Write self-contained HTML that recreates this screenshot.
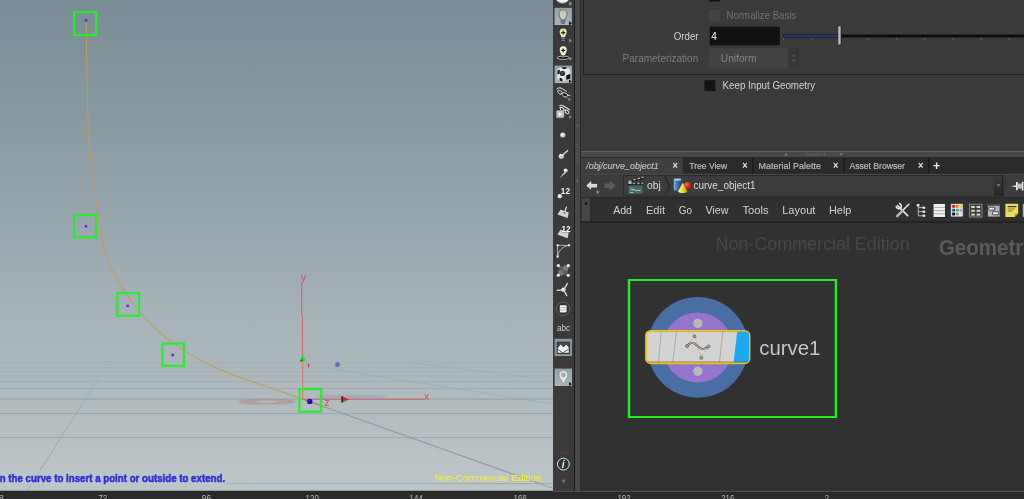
<!DOCTYPE html>
<html lang="en">
<head>
<meta charset="utf-8">
<title>Houdini - curve_object1</title>
<style>
*{box-sizing:border-box;margin:0;padding:0}
html,body{width:1024px;height:499px;overflow:hidden;background:#3a3a3a;font-family:"Liberation Sans",sans-serif;}
.abs{position:absolute}
#app{position:relative;width:1024px;height:499px;overflow:hidden;background:#3a3a3a}
#viewport{left:0;top:0;width:553px;height:491px;background:linear-gradient(to bottom,#798c95 0%,#8d9ea5 31%,#a3b0b6 61%,#b9c2c4 93%,#bcc5c7 100%);overflow:hidden}
#app svg{position:absolute;left:0;top:0;display:block}
#toolbar{left:553px;top:0;width:21px;height:491px;background:#3a3a3a;overflow:hidden}
#vdiv{left:574px;top:0;width:7px;height:491px;background:#484848;border-left:1px solid #1c1c1c;border-right:1px solid #2a2a2a}
#params{left:581px;top:0;width:443px;height:151px;background:#3a3a3a;overflow:hidden}
#hsplit{left:581px;top:151px;width:443px;height:7px;background:#484848;border-top:1px solid #5c5c5c;border-bottom:1px solid #2a2a2a}
#tabs{left:581px;top:158px;width:443px;height:17px;background:#2a2a2a;overflow:hidden}
#pathbar{left:581px;top:175px;width:443px;height:22px;background:#3a3a3a;overflow:hidden}
#menubar{left:581px;top:197px;width:443px;height:26px;background:#303030;overflow:hidden}
#network{left:581px;top:223px;width:443px;height:268px;background:#313131;overflow:hidden}
#timeline{left:0;top:490px;width:1024px;height:9px;overflow:hidden}
svg text{font-family:"Liberation Sans",sans-serif}
svg{will-change:transform}
#params svg,#tabs svg,#pathbar svg,#menubar svg,#timeline svg{filter:blur(.28px)}
#network text,#viewport text{filter:blur(.28px)}
</style>
</head>
<body>
<div id="app">
<!--VIEWPORT-->
<div id="viewport" class="abs">
<svg width="553" height="491" viewBox="0 0 553 491">
<defs>
<filter id="bl1" x="-20%" y="-200%" width="140%" height="500%"><feGaussianBlur stdDeviation="1.2"/></filter>
<filter id="soft" x="-10%" y="-10%" width="120%" height="120%"><feGaussianBlur stdDeviation="0.35"/></filter>
<linearGradient id="dg" gradientUnits="userSpaceOnUse" x1="112" y1="357" x2="27" y2="491"><stop offset="0" stop-color="#8896a0" stop-opacity="0"/><stop offset=".3" stop-color="#8896a0" stop-opacity=".7"/><stop offset="1" stop-color="#8896a0" stop-opacity="1"/></linearGradient>
<filter id="bl2" x="-20%" y="-200%" width="140%" height="500%"><feGaussianBlur stdDeviation="0.9 0.6"/></filter>
</defs>
<!-- ground grid -->
<g fill="none" stroke="#8896a0" stroke-width="1">
<path d="M0 355.4H553" opacity=".06"/>
<path d="M0 358.2H553" opacity=".09"/>
<path d="M0 361.6H553" opacity=".12"/>
<path d="M0 364.2H553" opacity=".15"/>
<path d="M0 367.7H553" opacity=".18"/>
<path d="M0 371.7H553" opacity=".22"/>
<path d="M0 376H553" opacity=".26"/>
<path d="M0 381.6H553" opacity=".32"/>
<path d="M0 388.5H553" opacity=".4"/>
<path d="M0 399.1H553" stroke-width="1.3" opacity=".62"/>
<path d="M0 413.6H553" opacity=".5"/>
<path d="M0 437.6H553" opacity=".55"/>
<path d="M226 483.6H553" opacity=".5"/>
<path d="M112 357L27 491" stroke="url(#dg)" opacity=".6"/>
<path d="M330 368.5L553 404" opacity=".3"/>
<path d="M410 362.5L553 380" opacity=".18"/>
</g>
<path d="M303 399.3L553 488.3" stroke="#7c8994" stroke-width="1.2" fill="none" opacity=".6"/>
<!-- shadows -->
<path fill-rule="evenodd" d="M237.6 401.7A29 3.1 0 1 0 295.6 401.7A29 3.1 0 1 0 237.6 401.7ZM255.6 401.6A11 1.2 0 1 0 277.6 401.6A11 1.2 0 1 0 255.6 401.6Z" fill="#ae9696" opacity=".75" filter="url(#bl2)"/>
<ellipse cx="352" cy="396.6" rx="38" ry="1.6" fill="#8f95b4" opacity=".55" filter="url(#bl1)"/>
<!-- curve -->
<path id="crv" d="M86.2 21C86.6 60 87.2 95 88.2 125C89.4 150 91 166 93.2 180C95.4 197 97.6 214 100.2 230C102.6 243 106 254 110.2 265C114.5 276 120 285 125.2 292.7C131 301 136 308 140.1 312.6C150 324 161 334 172.7 342.6C183 350 194 357 205.2 362.7C221 370.5 238 377 255.3 382.7C270 387.7 284 392.5 297.9 397.2L302.5 399" fill="none" stroke="#c39b58" stroke-width="1.05" opacity=".92"/>
<!-- axes -->
<g fill="none" stroke="#e2555a" stroke-width="1" opacity=".85">
<path d="M301.7 282.5V314.6M302.4 314.6V356"/>
<path d="M303 399.3H424"/>
<path d="M303 399.3L323 406.3"/>
</g>
<path d="M302.7 361V399" stroke="#e0685c" stroke-width="1" fill="none" opacity=".9"/><path d="M303.5 361V396" stroke="#9cc070" stroke-width=".6" fill="none" opacity=".6"/>
<path d="M302.7 354L305.6 361.2H299.8Z" fill="#1fe028"/>
<path d="M300 361.3H302.3V358.5Z" fill="#1b4a1b"/>
<rect x="307.9" y="363.6" width="1.2" height="3.4" fill="#e8202a"/>
<circle cx="337.5" cy="364.6" r="2.5" fill="#5c6cc4" stroke="#7f8bc8" stroke-width=".8"/>
<path d="M341.5 396.3L349.2 399.4L341.5 402.5Z" fill="#f01820"/>
<path d="M341.5 396.3H343V402.5H341.5Z" fill="#4a1b1b"/>
<path d="M343.5 400.5L349 399.6L343.5 402.4Z" fill="#5a9a30" opacity=".7"/>
<g font-size="10.5" fill="#e4494d" font-family="Liberation Sans, sans-serif">
<text x="300.7" y="280.6" textLength="5.4" lengthAdjust="spacingAndGlyphs">y</text>
<text x="424" y="399.8" textLength="5.2" lengthAdjust="spacingAndGlyphs">x</text>
<text x="324.6" y="406.4" textLength="5" lengthAdjust="spacingAndGlyphs">z</text>
</g>
<!-- handles -->
<g fill="none" stroke="#24f024" stroke-width="2.1" filter="url(#soft)">
<rect x="74.1" y="12.1" width="22" height="23"/>
<rect x="74.1" y="214.9" width="22" height="22.4"/>
<rect x="117.3" y="293.1" width="21.8" height="22.7"/>
<rect x="162.4" y="343.5" width="21.6" height="22.4"/>
<rect x="299.4" y="389.1" width="21.8" height="22.5"/>
</g>
<g fill="#6a22e0">
<rect x="84.8" y="19.2" width="2.5" height="2.5"/>
<rect x="84.7" y="225" width="2.5" height="2.5"/>
<rect x="126.4" y="304.6" width="2.5" height="2.5"/>
<rect x="171.5" y="353.7" width="2.5" height="2.5"/>
</g>
<circle cx="309.8" cy="401.4" r="2.7" fill="#1212b0"/>
<circle cx="309.2" cy="400.7" r="1" fill="#3030d0"/>
<!-- status text -->
<rect x="0" y="470.5" width="226" height="15" fill="#c3cbcc" opacity=".35"/>
<text x="-0.3" y="481.8" font-size="10.7" font-weight="bold" fill="#3030dc" stroke="#3030dc" stroke-width=".55" textLength="225.4" lengthAdjust="spacingAndGlyphs">n the curve to insert a point or outside to extend.</text>
<text x="434.2" y="481.1" font-size="9.9" fill="#ecec40" stroke="#ecec40" stroke-width=".2" textLength="107.4" lengthAdjust="spacingAndGlyphs">Non-Commercial Edition</text>
</svg>
</div>
<!--TOOLBAR-->
<div id="toolbar" class="abs">
<svg width="21" height="491" viewBox="553 0 21 491">
<defs>
<linearGradient id="hl" x1="0" x2="0" y1="0" y2="1"><stop offset="0" stop-color="#8ea2ab"/><stop offset="1" stop-color="#a7b5ba"/></linearGradient>
<radialGradient id="ball" cx=".4" cy=".35" r=".7"><stop offset="0" stop-color="#ffffff"/><stop offset="1" stop-color="#b4b4ac"/></radialGradient>
<filter id="tsoft" x="-10%" y="-10%" width="120%" height="120%"><feGaussianBlur stdDeviation="0.3"/></filter>
<linearGradient id="cubeg" x1="0" x2="1" y1="0" y2="1"><stop offset="0" stop-color="#ffffff"/><stop offset=".6" stop-color="#e2e2e2"/><stop offset="1" stop-color="#a8a8a8"/></linearGradient>
</defs>
<g filter="url(#tsoft)">
<!-- partial top icon -->
<ellipse cx="562.6" cy="-1.2" rx="6.4" ry="4.6" fill="#f0f0f0" stroke="#5a6a70" stroke-width="1"/>
<path d="M569.2 1.6L572.4 3.6L569.2 6.2Z" fill="#8c8c8c"/>
<!-- bulb (active) -->
<rect x="554.5" y="7.8" width="17.4" height="17.2" fill="url(#hl)"/>
<path d="M563 9.8C566.2 9.8 567.4 12.4 567 14.8C566.6 17 565.2 18.2 565 20H561C560.8 18.2 559.4 17 559 14.8C558.6 12.4 559.8 9.8 563 9.8Z" fill="#c9cab4" stroke="#4e6068" stroke-width=".8"/>
<rect x="561.2" y="20.2" width="3.6" height="3.2" rx=".6" fill="#6c7c84" stroke="#46565e" stroke-width=".6"/>
<path d="M569 21L572 23.2L569 25.4Z" fill="#1c1c1c"/>
<!-- bulb + -->
<path d="M563.2 28.4C566 28.4 567 30.6 566.7 32.6C566.4 34.6 565.2 35.6 565 37.2H561.4C561.2 35.6 560 34.6 559.7 32.6C559.4 30.6 560.4 28.4 563.2 28.4Z" fill="#ecebaa"/>
<path d="M561.2 32.6H565.2M563.2 30.6V34.6" stroke="#222" stroke-width="1.2"/>
<path d="M561.6 38.6H564.8M561.6 40.4H564.8" stroke="#8a8a8a" stroke-width="1"/>
<path d="M569 38.4L572 40.6L569 42.8Z" fill="#888"/>
<!-- bulb + stand -->
<path d="M563.2 46.2C566 46.2 567 48.4 566.7 50.4C566.4 52.4 565.2 53.4 565 55H561.4C561.2 53.4 560 52.4 559.7 50.4C559.4 48.4 560.4 46.2 563.2 46.2Z" fill="#f6f6e0"/>
<path d="M561.2 50.4H565.2M563.2 48.4V52.4" stroke="#222" stroke-width="1.2"/>
<ellipse cx="563.2" cy="57.8" rx="6" ry="1.6" fill="#111" stroke="#d8d8d8" stroke-width=".8"/>
<rect x="562.2" y="55" width="2" height="2.6" fill="#8a9aa0"/>
<path d="M569.6 57.2L572 58.8L569.6 60.6Z" fill="#aaa"/>
<!-- checker cube (active) -->
<rect x="554.6" y="65.6" width="17.4" height="17.5" fill="url(#hl)"/>
<path d="M557.4 70.6Q557.3 68.7 559.5 68.1L563.8 67.1Q566 66.8 567.8 67.8L569.6 69.2Q570.4 70 570.4 71.4V77.6Q570.4 79.3 568.8 80L564.2 81.6Q562.6 82 561.2 81.4L558.4 79.8Q557.4 79.2 557.4 77.8Z" fill="url(#cubeg)"/>
<path d="M561.2 67.6L565.6 66.9L567.4 68.2L563.4 69.2ZM557.5 70.4L559.8 69.4V73.6L557.5 74.4ZM566.2 75.2L570.3 74V78.4L566.2 79.8ZM559.6 77.6L562.4 78.8V81.6L559.6 80.4Z" fill="#141414"/>
<circle cx="562.4" cy="73.4" r="2.7" fill="#2e2e2e"/>
<circle cx="562.2" cy="73.2" r="1.3" fill="#4a4a4a"/>
<path d="M569 79.6L572 81.4L569 83.2Z" fill="#1c1c1c"/>
<!-- glasses -->
<g fill="none" stroke="#e6e6e6" stroke-width="1">
<path d="M556.8 89C558.2 87.4 560.4 87.4 562.4 88.8L566.6 91.4"/>
<path d="M557.6 90.8C558.8 89.8 560.6 90.2 561.6 91.6C562.4 93 561.8 94.4 560.4 94.2C558.8 93.8 557.8 92.4 557.6 90.8Z" fill="#3a3a3a"/>
<path d="M561.8 93.4C563.4 92.2 566 92.8 567.2 94.6C567.8 96 567 97.4 565.2 97C563.4 96.6 562.2 95 561.8 93.4Z" fill="#0c0c0c"/>
<path d="M567 94.6L570.2 95.8"/>
</g>
<path d="M567 98.4H571.2L569.1 101.2Z" fill="#808080"/>
<!-- glasses + play -->
<g fill="none" stroke="#e6e6e6" stroke-width="1.1">
<path d="M559.4 105.6C561 104.8 562.4 105.2 564 106.2L570 110"/>
<path d="M560 107.6C561.4 107.2 563 107.8 563.8 109C564.4 110.2 563.6 111.4 562.4 111C561.2 110.6 560.2 109.2 560 107.6Z" fill="#222"/>
<path d="M564.8 110C566.2 109.8 568 110.6 568.8 112C569.2 113.2 568.4 114 567 113.6C565.8 113.2 565 111.6 564.8 110Z" fill="#222"/>
</g>
<rect x="556.4" y="110.6" width="7.6" height="7.2" rx="1" fill="#c4c8c8" stroke="#8a9090" stroke-width=".6"/>
<path d="M559 112.4L562.2 114.2L559 116Z" fill="#fff"/>
<path d="M569.2 115L571.8 117L569.2 119Z" fill="#8a8a8a"/>
<!-- dot -->
<circle cx="562.8" cy="135" r="2.6" fill="url(#ball)"/>
<!-- pin -->
<path d="M562.4 155.2L568 150.2" stroke="#e2e2e2" stroke-width="1.3"/>
<circle cx="561.3" cy="156.3" r="2.6" fill="url(#ball)"/>
<circle cx="561.3" cy="156.3" r="1.1" fill="#8a8a8a" opacity=".5"/>
<!-- needle -->
<path d="M564.4 172L559.2 178.4L566.4 172.8Z" fill="#c8c8c8"/>
<circle cx="565.7" cy="170.6" r="2.1" fill="url(#ball)"/>
<!-- .12 -->
<circle cx="559.8" cy="196.2" r="2.3" fill="url(#ball)"/>
<text x="560.8" y="194.2" font-size="8.4" font-weight="bold" fill="#f4f4f4" textLength="9.2" lengthAdjust="spacingAndGlyphs">12</text>
<!-- paper pin -->
<path d="M560.6 209.6L568.8 212.4L567.6 218L557.4 214.4Z" fill="#d4d4cc"/>
<path d="M566.6 206.6L564.6 212.6" stroke="#f0f0f0" stroke-width="1.1"/>
<circle cx="564.4" cy="213" r="1.1" fill="#7a7a7a"/>
<!-- paper 12 -->
<path d="M560.6 229.4L568.8 232.2L567.6 238.2L557.4 234.4Z" fill="#d4d4cc"/>
<text x="561.6" y="232.4" font-size="8.4" font-weight="bold" fill="#f8f8f8" textLength="9" lengthAdjust="spacingAndGlyphs" stroke="#3a3a3a" stroke-width=".5" paint-order="stroke">12</text>
<!-- curve corner -->
<g fill="none" stroke="#b4c6b4" stroke-width=".9">
<path d="M557.6 256.6V245.3H569"/>
<path d="M557.6 256.6C558.4 251 562 246.6 569 245.3"/>
</g>
<g fill="#eef4ee"><rect x="556.6" y="244.3" width="2" height="2"/><rect x="568" y="244.3" width="2" height="2"/><rect x="556.6" y="255.6" width="2" height="2"/></g>
<!-- 4 dots -->
<rect x="558.3" y="265.6" width="10" height="9.8" fill="#5a5a5a" stroke="#2a2a2a" stroke-width=".6"/>
<path d="M563.3 265.6H568.3V270.5H563.3ZM558.3 270.5H563.3V275.4H558.3Z" fill="#7a7a7a"/>
<g fill="#f0f0f0"><circle cx="558.3" cy="265.6" r="1.6"/><circle cx="568.3" cy="265.6" r="1.6"/><circle cx="558.3" cy="275.3" r="1.6"/><circle cx="568.3" cy="275.3" r="1.6"/></g>
<!-- tripod -->
<g stroke="#e2e2e2" stroke-width="1.3" stroke-linecap="round"><path d="M563.5 289.8L567.4 283.6M563.5 289.8L557.2 290.4M563.5 289.8L566.8 295.6"/></g>
<circle cx="563.5" cy="289.8" r="2.3" fill="url(#ball)"/>
<!-- circle list -->
<circle cx="563.1" cy="308.8" r="6.6" fill="#333" stroke="#6a6a62" stroke-width=".9"/>
<rect x="559.8" y="305.2" width="6.8" height="7.2" rx=".8" fill="#f2f2f2"/>
<path d="M559.8 307.6H566.6M559.8 310H566.6" stroke="#9ab09a" stroke-width=".8"/>
<!-- abc -->
<text x="556.9" y="330.7" font-size="9.4" fill="#cfcfcf" textLength="13.2" lengthAdjust="spacingAndGlyphs">abc</text>
<!-- landscape (active) -->
<rect x="554.6" y="338.8" width="17.4" height="17.3" fill="#8598a0"/>
<rect x="557.2" y="342.2" width="12.2" height="11.2" fill="#4a4a4a" stroke="#262626" stroke-width=".8"/>
<path d="M557.8 348L560.8 344.6L563.4 347.4L566.2 344.8L568.8 347.6V352.8H557.8Z" fill="#f4f4f4"/>
<path d="M557.8 349.4L562.8 352.8L568.8 349" fill="none" stroke="#555" stroke-width="1"/>
<!-- marker (active) -->
<rect x="554.6" y="368.6" width="17.4" height="17.4" fill="url(#hl)"/>
<path d="M563.4 370.6C566.2 370.6 567.8 372.6 567.8 375C567.8 378 564.6 381 563.4 384.6C562.2 381 559 378 559 375C559 372.6 560.6 370.6 563.4 370.6Z" fill="#e4e4e4" stroke="#7a8488" stroke-width=".6"/>
<circle cx="563.4" cy="375" r="1.9" fill="#a4a8a8" stroke="#888" stroke-width=".5"/>
<path d="M569 382L572 384L569 386.2Z" fill="#1c1c1c"/>
<!-- separator -->
<rect x="554" y="452.4" width="19" height=".8" fill="#444"/>
<!-- info -->
<circle cx="563.4" cy="464.1" r="5.9" fill="#27343a" stroke="#e6e6e6" stroke-width="1"/>
<text x="561.7" y="468" font-size="10" font-weight="bold" font-style="italic" font-family="Liberation Serif, serif" fill="#f0f0f0">i</text>
<path d="M561.4 479.8H565.6L563.5 483.4Z" fill="#777"/>
</g>
</svg>
</div>
<div id="vdiv" class="abs">
<svg width="5" height="491" viewBox="575 0 5 491">
<g fill="#5e5e5e"><rect x="576.4" y="144" width="2.4" height=".8"/><rect x="576.4" y="146.6" width="2.4" height=".8"/><rect x="576.4" y="149.2" width="2.4" height=".8"/><rect x="576.4" y="151.8" width="2.4" height=".8"/><rect x="576.4" y="154.4" width="2.4" height=".8"/><rect x="576.4" y="157" width="2.4" height=".8"/><rect x="576.4" y="159.6" width="2.4" height=".8"/><rect x="576.4" y="162.2" width="2.4" height=".8"/></g>
<path d="M578.4 123.8V127.8L576.4 125.8ZM576.6 178.6V182.6L578.6 180.6Z" fill="#6a6a6a"/>
</svg>
</div>
<!--PARAMS-->
<div id="params" class="abs">
<svg width="443" height="151" viewBox="581 0 443 151">
<defs>
<linearGradient id="hg" x1="0" x2="1" y1="0" y2="0"><stop offset="0" stop-color="#d8d8d8"/><stop offset=".5" stop-color="#b8b8b8"/><stop offset="1" stop-color="#8a8a8a"/></linearGradient>
</defs>
<path d="M583.5 0V74.4H1024" fill="none" stroke="#222" stroke-width="1"/>
<rect x="709" y="0" width="11" height="1.6" fill="#141414"/>
<rect x="709" y="10" width="11" height="11" fill="#434343"/>
<text x="726.6" y="19.3" font-size="10.5" fill="#727272" textLength="69.6" lengthAdjust="spacingAndGlyphs">Normalize Basis</text>
<text x="673.8" y="39.7" font-size="10.5" fill="#d2d2d2" textLength="24.8" lengthAdjust="spacingAndGlyphs">Order</text>
<rect x="709.7" y="26.6" width="70.1" height="18.8" fill="#111"/>
<text x="711.2" y="39.7" font-size="10.5" fill="#fff" textLength="5.6" lengthAdjust="spacingAndGlyphs">4</text>
<rect x="783" y="34.6" width="241" height="2.8" fill="#0c0c0c"/>
<rect x="783.6" y="35.3" width="55" height="1.4" fill="#21549a"/>
<g fill="#6a6a6a">
<rect x="783" y="38" width="1" height="1.6"/><rect x="811.2" y="38" width="1" height="1.6"/><rect x="867.5" y="38" width="1" height="1.6"/><rect x="895.7" y="38" width="1" height="1.6"/><rect x="924" y="38" width="1" height="1.6"/><rect x="952.5" y="38" width="1" height="1.6"/><rect x="980.7" y="38" width="1" height="1.6"/><rect x="1008.7" y="38" width="1" height="1.6"/>
</g>
<rect x="840.2" y="26.6" width="1.4" height="18" rx=".5" fill="#1c1c1c"/><rect x="838.4" y="26.3" width="2.5" height="18.3" rx=".8" fill="url(#hg)"/>
<text x="622.6" y="62" font-size="10.5" fill="#7c7c7c" textLength="75.6" lengthAdjust="spacingAndGlyphs">Parameterization</text>
<rect x="708.8" y="48.2" width="90.6" height="19.4" rx="1" fill="#424242"/>
<rect x="788" y="48.2" width="11.4" height="19.4" fill="#363636"/>
<path d="M793.8 53.4L795.6 56.6H792ZM793.8 62.4L795.6 59.2H792Z" fill="#505050"/>
<text x="720.8" y="62" font-size="10.5" fill="#858585" textLength="35.6" lengthAdjust="spacingAndGlyphs">Uniform</text>
<rect x="704.4" y="80.2" width="11" height="10.8" fill="#141414"/>
<text x="722.6" y="89.1" font-size="10.5" fill="#d2d2d2" textLength="92.6" lengthAdjust="spacingAndGlyphs">Keep Input Geometry</text>
</svg>
</div>
<div id="hsplit" class="abs">
<svg width="443" height="5" viewBox="581 152 443 5">
<path d="M784 155.4L786 153.2L788 155.4ZM839 153.4L841 155.6L843 153.4Z" fill="#808080"/>
<g fill="#6a6a6a"><rect x="806" y="153.4" width="1" height="2.2"/><rect x="808.6" y="153.4" width="1" height="2.2"/><rect x="811.2" y="153.4" width="1" height="2.2"/><rect x="813.8" y="153.4" width="1" height="2.2"/><rect x="816.4" y="153.4" width="1" height="2.2"/><rect x="819" y="153.4" width="1" height="2.2"/><rect x="821.6" y="153.4" width="1" height="2.2"/><rect x="824.2" y="153.4" width="1" height="2.2"/></g>
</svg>
</div>
<!--TABS-->
<div id="tabs" class="abs">
<svg width="443" height="17" viewBox="581 158 443 17">
<rect x="581" y="157.8" width="101.9" height="17.2" fill="#3f3f3f"/>
<g fill="#1a1a1a"><rect x="752" y="158" width="1.4" height="17"/><rect x="843" y="158" width="1.4" height="17"/><rect x="928" y="158" width="1.4" height="17"/></g>
<rect x="581" y="173.8" width="443" height="1.4" fill="#474747"/>
<g font-size="9.2" fill="#bcbcbc" stroke="#bcbcbc" stroke-width=".2">
<text x="586.2" y="169.4" font-style="italic" textLength="72.6" lengthAdjust="spacingAndGlyphs">/obj/curve_object1</text>
<text x="689.3" y="169.4" textLength="38" lengthAdjust="spacingAndGlyphs">Tree View</text>
<text x="758.5" y="169.4" textLength="62.4" lengthAdjust="spacingAndGlyphs">Material Palette</text>
<text x="849.4" y="169.4" textLength="55.6" lengthAdjust="spacingAndGlyphs">Asset Browser</text>
</g>
<g font-size="10" font-weight="bold" fill="#e4e4e4">
<text x="672.6" y="168.6" textLength="5.4" lengthAdjust="spacingAndGlyphs">×</text>
<text x="742.2" y="168.6" textLength="5.4" lengthAdjust="spacingAndGlyphs">×</text>
<text x="833" y="168.6" textLength="5.4" lengthAdjust="spacingAndGlyphs">×</text>
<text x="918" y="168.6" textLength="5.4" lengthAdjust="spacingAndGlyphs">×</text>
<text x="933" y="169.6" font-size="12" textLength="7.2" lengthAdjust="spacingAndGlyphs">+</text>
</g>
</svg>
</div>
<!--PATHBAR-->
<div id="pathbar" class="abs">
<svg width="443" height="22" viewBox="581 175 443 22">
<defs>
<linearGradient id="ag" x1="0" x2="0" y1="0" y2="1"><stop offset="0" stop-color="#f4f4f4"/><stop offset="1" stop-color="#b8b8b8"/></linearGradient>
<linearGradient id="cyl" x1="0" x2="1" y1="0" y2="0"><stop offset="0" stop-color="#8ab4e0"/><stop offset=".45" stop-color="#3a6eb4"/><stop offset="1" stop-color="#1e4680"/></linearGradient>
<radialGradient id="sph" cx=".38" cy=".3" r=".8"><stop offset="0" stop-color="#f07060"/><stop offset=".5" stop-color="#cc2a1a"/><stop offset="1" stop-color="#7e1208"/></radialGradient>
<linearGradient id="cone" x1="0" x2="1" y1="0" y2="0"><stop offset="0" stop-color="#fff8b0"/><stop offset=".5" stop-color="#f0d838"/><stop offset="1" stop-color="#b8920c"/></linearGradient>
<linearGradient id="ddg" x1="0" x2="0" y1="0" y2="1"><stop offset="0" stop-color="#3c3c3c"/><stop offset="1" stop-color="#272727"/></linearGradient>
</defs>
<rect x="581" y="175" width="443" height="22" fill="#3c3c3c"/>
<rect x="623.4" y="175.6" width="379.4" height="20.4" fill="#3c3c3c" stroke="#2a2a2a" stroke-width=".9"/>
<rect x="994" y="176" width="8.4" height="20" fill="url(#ddg)"/><rect x="1002.2" y="175.4" width="1" height="21" fill="#1e1e1e"/>
<path d="M996.5 183.9H1000.5L998.5 187Z" fill="#767676"/>
<!-- back / forward -->
<path d="M585.8 185.6L591.6 180.3V183.4H597.6V188H591.6V191Z" fill="url(#ag)" stroke="#202028" stroke-width=".7"/>
<path d="M596.6 189.8L599.6 192L596.6 194.4Z" fill="#8a8a8a"/>
<path d="M615.6 185.6L609.8 180.4V183.5H604.4V187.9H609.8V190.9Z" fill="#5a5a5a"/>
<!-- obj icon: clapperboard -->
<g>
<rect x="627.8" y="185" width="15.6" height="9.4" fill="#2c4244"/>
<rect x="628.6" y="185.8" width="14" height="7.8" fill="#48686a"/>
<path d="M630.4 190.4C631.4 188 632.4 188 633 190.4C633.6 188.6 634.6 188.6 635 190.4H640.6M630 192.6H633.4" stroke="#d4dede" stroke-width=".9" fill="none" opacity=".85"/>
<rect x="627.8" y="182.2" width="15.6" height="2.7" fill="#1c1c1c"/>
<path d="M632.6 182.6h2.6v1.6h-2.6zM637 182.6h2.6v1.6h-2.6zM641.2 182.6h2v1.6h-2z" fill="#9a9a9a"/>
<path d="M627.8 181L643.2 176.8L643.8 178.9L628.4 183.2Z" fill="#1c1c1c"/>
<path d="M633 179.4l2.6-.7.3 1.2-2.6.7zM637.4 178.2l2.6-.7.3 1.2-2.6.7zM641.4 177.1l1.8-.5.3 1.2-1.8.5z" fill="#b4b4b4"/>
<rect x="628.4" y="180.6" width="3.2" height="3.4" fill="#a9bcc6"/>
</g>
<text x="647" y="188.5" font-size="11.1" fill="#dadada" textLength="13.8" lengthAdjust="spacingAndGlyphs">obj</text>
<path d="M664.6 176L669.6 186L664.6 196" fill="none" stroke="#202020" stroke-width="1"/>
<!-- geometry icon -->
<g>
<circle cx="687.6" cy="185.8" r="3.8" fill="url(#sph)"/>
<path d="M673.8 179.6C673.8 178 681.4 178 681.4 179.6V189.6C681.4 191.2 673.8 191.2 673.8 189.6Z" fill="url(#cyl)"/>
<ellipse cx="677.6" cy="179.6" rx="3.8" ry="1.2" fill="#a8c8ee"/>
<path d="M682.8 182.6L687.4 191.4C686 193.4 679.4 193.4 678 191.4Z" fill="url(#cone)"/>
</g>
<text x="693.5" y="188.5" font-size="11.1" fill="#dadada" textLength="62" lengthAdjust="spacingAndGlyphs">curve_object1</text>
<!-- pin -->
<g>
<path d="M1010.8 186.2L1016 185.2V187.2Z" fill="#d0d0d0"/>
<rect x="1016" y="182" width="1.8" height="8.2" fill="#e8e8e8"/>
<rect x="1017.8" y="183.6" width="4" height="5" fill="#c0c0c0"/>
<rect x="1021.8" y="181.6" width="1.6" height="9" fill="#e0e0e0"/>
</g>
</svg>
</div>
<!--MENUBAR-->
<div id="menubar" class="abs">
<svg width="443" height="26" viewBox="581 197 443 26">
<rect x="581" y="197" width="443" height="1.4" fill="#2a2a2a"/>
<rect x="581" y="221.2" width="443" height="1.8" fill="#222"/>
<rect x="581.8" y="198.4" width="8.6" height="22.8" fill="#464646"/>
<rect x="590.4" y="198.4" width="1" height="22.8" fill="#242424"/>
<path d="M586.2 201.6L587.8 204.4H584.6Z" fill="#0a0a0a"/>
<path d="M600.4 208.4V211.6L598 210Z" fill="#383838"/>
<g font-size="10.9" fill="#d2d2d2">
<text x="613.2" y="213.9" textLength="18.8" lengthAdjust="spacingAndGlyphs">Add</text>
<text x="646" y="213.9" textLength="19" lengthAdjust="spacingAndGlyphs">Edit</text>
<text x="678.8" y="213.9" textLength="13.2" lengthAdjust="spacingAndGlyphs">Go</text>
<text x="705.4" y="213.9" textLength="23" lengthAdjust="spacingAndGlyphs">View</text>
<text x="742.4" y="213.9" textLength="26.2" lengthAdjust="spacingAndGlyphs">Tools</text>
<text x="782.2" y="213.9" textLength="33.2" lengthAdjust="spacingAndGlyphs">Layout</text>
<text x="829" y="213.9" textLength="22.4" lengthAdjust="spacingAndGlyphs">Help</text>
</g>
<!-- wrench & screwdriver -->
<g stroke-linecap="round" fill="none">
<path d="M897.6 205.6L907.6 215.6" stroke="#d8d8d8" stroke-width="2"/>
<path d="M896.2 206.6A2.6 2.6 0 1 0 899.6 203.6" stroke="#e8e8e8" stroke-width="1.6"/>
<path d="M908.8 204.2L903.6 209.6" stroke="#e8e8e8" stroke-width="1.5"/>
<path d="M902.4 210.8L897.2 216.2" stroke="#b8b8b8" stroke-width="2.4"/>
</g>
<!-- tree -->
<g fill="none" stroke="#a8c0a8" stroke-width="1">
<path d="M918.3 206V215.8H923M918.3 207.6H923M918.3 211.6H923"/>
</g>
<g fill="#e8e8e8"><rect x="916.8" y="204" width="2.6" height="2.4"/><rect x="922.6" y="206.6" width="2.6" height="2.2"/><rect x="922.6" y="210.6" width="2.6" height="2.2"/><rect x="922.6" y="214.6" width="2.6" height="2.2"/></g>
<!-- list -->
<rect x="933.6" y="204" width="11.4" height="13.2" fill="#f0f0f0"/>
<path d="M933.6 207.4H945M933.6 210.6H945M933.6 213.8H945" stroke="#9cb89c" stroke-width="1"/>
<rect x="934.4" y="217.2" width="11.4" height=".8" fill="#1a1a1a"/>
<!-- palette -->
<rect x="950.6" y="203.6" width="12.6" height="13.4" rx="1" fill="#e8e8e8" stroke="#303048" stroke-width=".8"/>
<g>
<rect x="952.2" y="205" width="2.8" height="2.8" fill="#e02020"/><rect x="955.8" y="205" width="2.8" height="2.8" fill="#f08020"/><rect x="959.4" y="205" width="2.8" height="2.8" fill="#f0d020"/>
<rect x="952.2" y="208.8" width="2.8" height="2.8" fill="#1c5cb0"/><rect x="955.8" y="208.8" width="2.8" height="2.8" fill="#30c030"/><rect x="959.4" y="208.8" width="2.8" height="2.8" fill="#80a8e0"/>
<rect x="952.2" y="212.6" width="2.8" height="2.8" fill="#101010"/><rect x="955.8" y="212.6" width="2.8" height="2.8" fill="#909090"/><rect x="959.4" y="212.6" width="2.8" height="2.8" fill="#d8e4d8"/>
</g>
<!-- grid -->
<rect x="969.4" y="204.2" width="12.6" height="12.8" fill="#3c3c3c" stroke="#909090" stroke-width=".9"/>
<g fill="#d8d8d8"><rect x="971.2" y="206" width="3.6" height="2"/><rect x="976.6" y="206" width="3.6" height="2"/><rect x="971.2" y="209.8" width="3.6" height="2"/><rect x="976.6" y="209.8" width="3.6" height="2"/><rect x="971.2" y="213.6" width="3.6" height="2"/><rect x="976.6" y="213.6" width="3.6" height="2"/></g>
<!-- layout -->
<rect x="987.4" y="204" width="12.6" height="13" fill="#b4b4b4" stroke="#303040" stroke-width=".8"/>
<rect x="987.4" y="204" width="12.6" height="1.8" fill="#404858"/>
<rect x="988.8" y="207.2" width="6" height="3" rx=".6" fill="#f4f4f4" stroke="#202020" stroke-width=".8"/>
<rect x="992.6" y="211.8" width="6" height="3" rx=".6" fill="#f4f4f4" stroke="#202020" stroke-width=".8"/>
<!-- sticky -->
<path d="M1005.4 203.8H1018.2V213.6L1014.6 217H1005.4Z" fill="#f0dc5c"/>
<path d="M1018.2 213.6L1014.6 217V213.6Z" fill="#b89c28"/>
<path d="M1007.6 206.6H1016.4" stroke="#404020" stroke-width="1.3"/>
<path d="M1007.6 209H1014.6M1007.6 211H1012.6" stroke="#807838" stroke-width="1"/>
<rect x="1022.8" y="204" width="2" height="13" fill="#b0b0b0"/>
</svg>
</div>
<!--NETWORK-->
<div id="network" class="abs">
<svg width="443" height="268" viewBox="581 223 443 268">
<defs>
<filter id="nsoft" x="-5%" y="-5%" width="110%" height="110%"><feGaussianBlur stdDeviation="0.4"/></filter>
<clipPath id="ncl"><rect x="646.6" y="331.4" width="102.4" height="31.2" rx="3.6"/></clipPath>
</defs>
<text x="715.6" y="250.4" font-size="18.6" fill="#474747" textLength="194" lengthAdjust="spacingAndGlyphs">Non-Commercial Edition</text>
<text x="938.8" y="254.7" font-size="21.8" font-weight="bold" fill="#5a5a5a" textLength="96" lengthAdjust="spacingAndGlyphs">Geometry</text>
<path fill-rule="evenodd" d="M627.8 279H837.1V417.9H627.8ZM630.2 281H834.7V415.9H630.2Z" fill="#24ee24" filter="url(#nsoft)"/>
<g filter="url(#nsoft)">
<circle cx="697.8" cy="347.3" r="50.4" fill="#4a6ea3"/>
<circle cx="697.7" cy="347.4" r="35" fill="#9575cd"/>
<circle cx="697.8" cy="323.4" r="4.7" fill="#b9b9b9"/>
<circle cx="697.8" cy="371.2" r="4.7" fill="#b9b9b9"/>
<rect x="646.1" y="331" width="103.3" height="32.1" rx="4.6" fill="#d3d3d3" stroke="#ecc020" stroke-width="2.1"/>
<g clip-path="url(#ncl)">
<path d="M737.3 331L733.5 363H750V331Z" fill="#1da9f2"/>
<path d="M661.4 331L658.4 363M676.6 331L672.6 363M722.9 331L719.4 363" stroke="#9a9a9a" stroke-width=".7" fill="none"/>
<rect x="647" y="361.4" width="103" height="1.4" fill="#6e5a20" opacity=".55"/>
<rect x="647" y="331.2" width="103" height="1" fill="#a0a0a0" opacity=".5"/>
</g>
<path d="M687 346.1L694.5 336.3L701.3 357.8L708.6 346.5" fill="none" stroke="#e8a040" stroke-width=".9" stroke-dasharray="1.6 1"/>
<path d="M687.2 346C690 342 693.4 341.6 697 345.6C700.6 349.6 704.6 350.4 708.4 346.6" fill="none" stroke="#505050" stroke-width="2.1"/>
<path d="M687.2 346C690 342 693.4 341.6 697 345.6C700.6 349.6 704.6 350.4 708.4 346.6" fill="none" stroke="#d0d0d0" stroke-width="1"/>
<g fill="#a0a0a0" stroke="#505050" stroke-width=".6"><circle cx="694.5" cy="336.3" r="1.5"/><circle cx="687" cy="346.1" r="1.5"/><circle cx="708.6" cy="346.5" r="1.5"/><circle cx="701.3" cy="357.8" r="1.5"/></g>
</g>
<text x="759.2" y="354.8" font-size="20" fill="#c6c6c6" textLength="61.2" lengthAdjust="spacingAndGlyphs">curve1</text>
</svg>
</div>
<!--TIMELINE-->
<div id="timeline" class="abs">
<svg width="1024" height="9" viewBox="0 490 1024 9">
<rect x="0" y="490.75" width="1024" height="9" fill="#2a2a2a"/>
<rect x="553" y="490.75" width="471" height="1" fill="#585858"/>

<g font-size="9.6" fill="#b8b8b8">
<text x="-1.6" y="500.6">8</text>
<text x="98.2" y="500.6" textLength="9" lengthAdjust="spacingAndGlyphs">72</text>
<text x="201.8" y="500.6" textLength="9.2" lengthAdjust="spacingAndGlyphs">96</text>
<text x="305.6" y="500.6" textLength="13.2" lengthAdjust="spacingAndGlyphs">120</text>
<text x="409.6" y="500.6" textLength="13.2" lengthAdjust="spacingAndGlyphs">144</text>
<text x="513.5" y="500.6" textLength="13.2" lengthAdjust="spacingAndGlyphs">168</text>
<text x="617.4" y="500.6" textLength="13.2" lengthAdjust="spacingAndGlyphs">192</text>
<text x="721.2" y="500.6" textLength="13.2" lengthAdjust="spacingAndGlyphs">216</text>
<text x="824.8" y="500.6" textLength="4.4" lengthAdjust="spacingAndGlyphs">2</text>
</g>
</svg>
</div>
</div>
</body>
</html>
